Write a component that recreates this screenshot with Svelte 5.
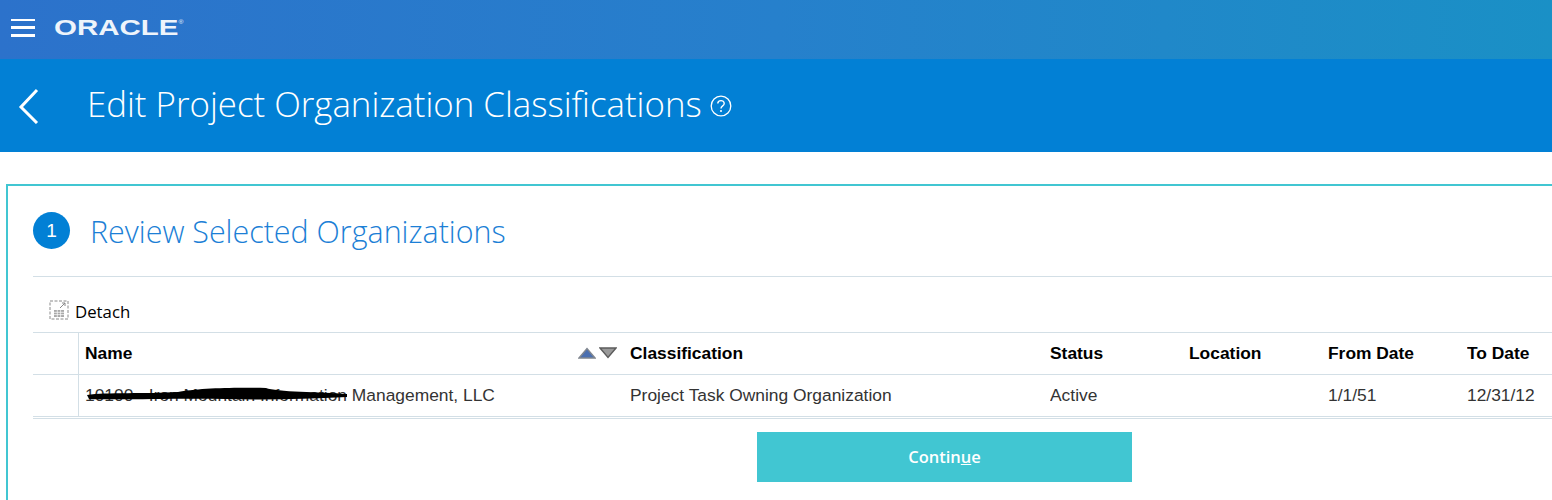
<script>
  let columns = [
    { label: "Classification", value: "Project Task Owning Organization", width: 420 },
    { label: "Status", value: "Active", width: 139 },
    { label: "Location", value: "", width: 139 },
    { label: "From Date", value: "1/1/51", width: 139 },
    { label: "To Date", value: "12/31/12", width: 85 }
  ];
</script>

<div class="page">
  <header class="brand">
    <button class="menu" aria-label="Menu"><span></span><span></span><span></span></button>
    <div class="logo">ORACLE<sup>®</sup></div>
  </header>

  <div class="titlebar">
    <svg class="back" width="22" height="36" viewBox="0 0 22 36">
      <path d="M19 2 L3 19 L19 35" fill="none" stroke="#fff" stroke-width="3" />
    </svg>
    <h1>Edit Project Organization Classifications</h1>
    <svg class="help" width="22" height="22" viewBox="0 0 22 22">
      <circle cx="11" cy="11" r="9.8" fill="none" stroke="#fff" stroke-width="1.3" />
      <path d="M7.8 8.6 C7.8 4.6 14.2 4.6 14.2 8.5 C14.2 11 11 10.8 11 13.6" fill="none" stroke="#fff" stroke-width="1.4" />
      <circle cx="11" cy="16" r="1" fill="#fff" />
    </svg>
  </div>

  <section class="train">
    <div class="step">
      <span class="badge">1</span>
      <h2>Review Selected Organizations</h2>
    </div>

    <div class="toolbar">
      <svg width="20" height="20" viewBox="0 0 20 20">
        <path d="M1 1 H19 V19 H1 Z" fill="none" stroke="#8a8a8a" stroke-dasharray="3 1.5" />
        <path d="M11 8 L16 3 M13 3 H16 V6" fill="none" stroke="#8a8a8a" />
        <rect x="5" y="10" width="10" height="7" fill="#a9a9a9" />
        <path d="M5 12.3 H15 M5 14.6 H15 M8.3 10 V17 M11.6 10 V17" stroke="#fff" stroke-width="0.7" />
      </svg>
      <span>Detach</span>
    </div>

    <div class="table">
      <div class="row head">
        <div class="gutter"></div>
        <div class="cell name">
          Name
          <span class="sort">
            <svg width="18" height="12" viewBox="0 0 18 12"><path d="M1 11 L9 1.5 L17 11 Z" fill="#4a6fb0" stroke="#80868f" stroke-width="1.4" /></svg>
            <svg width="18" height="12" viewBox="0 0 18 12"><path d="M1 1 L9 10.5 L17 1 Z" fill="#9a9a9a" stroke="#5c5c5c" stroke-width="1.4" /></svg>
          </span>
        </div>
        {#each columns as col}
          <div class="cell" style="width: {col.width}px">{col.label}</div>
        {/each}
      </div>
      <div class="row body">
        <div class="gutter"></div>
        <div class="cell name">
          10100 - Iron Mountain Information Management, LLC
          <svg class="scribble" width="264" height="18" viewBox="0 0 264 18">
            <path d="M1 9 C20 6 60 8 92 6 C110 2 150 1 180 2 C190 6 235 6 261 8 L261 11 C220 13 180 14 140 13 C90 12 40 14 3 13 Z" fill="#000" />
          </svg>
        </div>
        {#each columns as col}
          <div class="cell" style="width: {col.width}px">{col.value}</div>
        {/each}
      </div>
    </div>

    <div class="actions">
      <button class="continue">Contin<u>u</u>e</button>
    </div>
  </section>
</div>

<style>
  :global(body) {
    margin: 0;
    overflow: hidden;
    background: #fff;
  }
  .page {
    width: 1552px;
    height: 500px;
    overflow: hidden;
    font-family: "Liberation Sans", Arial, sans-serif;
  }
  .brand {
    height: 59px;
    display: flex;
    align-items: center;
    background: linear-gradient(90deg, #2c72cb 0%, #2680cc 50%, #1a90c6 100%);
    padding-left: 11px;
    padding-bottom: 4px;
    box-sizing: border-box;
  }
  .menu {
    width: 24px;
    height: 18px;
    padding: 0;
    border: 0;
    background: none;
    display: flex;
    flex-direction: column;
    justify-content: space-between;
  }
  .menu span {
    display: block;
    height: 2.5px;
    background: #fff;
  }
  .logo {
    margin-left: 19px;
    color: #eef4fb;
    font-size: 22px;
    line-height: 20px;
    font-weight: 700;
    transform: scaleX(1.34);
    transform-origin: left center;
  }
  .logo sup {
    font-size: 5px;
    font-weight: 400;
    vertical-align: 11px;
    line-height: 0;
  }
  .titlebar {
    height: 93px;
    background: #0280d5;
    display: flex;
    align-items: center;
    color: #fff;
  }
  .back {
    margin-left: 18px;
  }
  h1 {
    margin: -4px 0 0 47px;
    font-family: "Open Sans", sans-serif;
    font-weight: 300;
    font-size: 34.85px;
    color: #fff;
    white-space: nowrap;
  }
  .help {
    margin-left: 8px;
  }
  .train {
    margin: 32px 0 0 6px;
    height: 320px;
    border: 2px solid #41c6d2;
    border-right: 0;
    border-bottom: 0;
    padding-left: 25px;
    box-sizing: border-box;
  }
  .step {
    height: 91px;
    display: flex;
    align-items: center;
    border-bottom: 1px solid #d3dfe6;
    padding-bottom: 1px;
    box-sizing: border-box;
  }
  .badge {
    width: 37px;
    height: 37px;
    border-radius: 50%;
    background: #0280d5;
    color: #fff;
    font-size: 19px;
    display: flex;
    align-items: center;
    justify-content: center;
  }
  h2 {
    margin: 0 0 0 20px;
    font-family: "Open Sans", sans-serif;
    font-weight: 300;
    font-size: 30.45px;
    color: #1c7fd6;
    white-space: nowrap;
  }
  .toolbar {
    height: 55px;
    display: flex;
    align-items: center;
    padding: 14px 0 0 16px;
    box-sizing: border-box;
    gap: 6px;
    font-family: "Open Sans", sans-serif;
    font-size: 16.8px;
    color: #000;
  }
  .toolbar svg {
    margin-top: -4px;
  }
  .table {
    border-top: 1px solid #d3dfe6;
    border-bottom: 1px solid #d3dfe6;
    padding-bottom: 1px;
  }
  .row {
    height: 42px;
    display: flex;
    box-sizing: border-box;
    border-bottom: 1px solid #d3dfe6;
    font-size: 17.4px;
  }
  .row.head {
    font-weight: 700;
    color: #000;
  }
  .row.body {
    color: #333;
  }
  .gutter {
    width: 45px;
    border-right: 1px solid #d3dfe6;
    flex: none;
  }
  .cell {
    flex: none;
    display: flex;
    align-items: center;
    box-sizing: border-box;
    white-space: nowrap;
    overflow: hidden;
  }
  .cell.name {
    width: 551px;
    padding-left: 6px;
    position: relative;
  }
  .sort {
    position: absolute;
    left: 499px;
    top: 14px;
    display: flex;
    gap: 3px;
  }
  .scribble {
    position: absolute;
    left: 7px;
    top: 11px;
  }
  .actions {
    padding-left: 724px;
    padding-top: 13px;
  }
  .continue {
    width: 375px;
    height: 50px;
    border: 0;
    background: #41c6d2;
    color: #fff;
    font-family: "Open Sans", sans-serif;
    font-weight: 600;
    font-size: 16.5px;
    padding: 0 0 2px;
  }
</style>
